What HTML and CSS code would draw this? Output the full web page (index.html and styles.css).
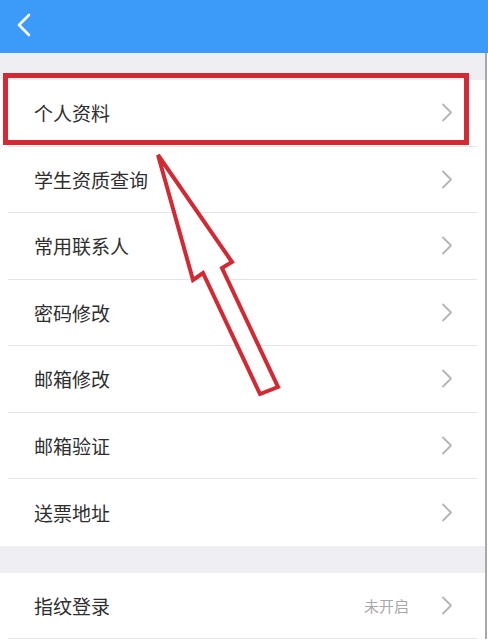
FILE: index.html
```html
<!DOCTYPE html>
<html lang="zh-CN">
<head>
  <meta charset="UTF-8" />
  <meta name="viewport" content="width=device-width, initial-scale=1.0" />
  <title>设置</title>
  <link rel="stylesheet" href="styles.css">
</head>
<body>
  <div class="page">
    <div class="topbar">
      <svg class="back" width="16" height="24" viewBox="0 0 16 24">
        <polyline points="13,2 3,12 13,22" fill="none" stroke="#fff" stroke-width="2.6" stroke-linecap="round" stroke-linejoin="round"/>
      </svg>
    </div>

    <div class="content">
      <div class="gap"></div>
      <div class="group">
        <div class="row"><span class="label">个人资料</span><svg class="chev" width="12" height="19" viewBox="0 0 12 19"><polyline points="2,1.5 10,9.5 2,17.5"/></svg></div>
        <div class="row"><span class="label">学生资质查询</span><svg class="chev" width="12" height="19" viewBox="0 0 12 19"><polyline points="2,1.5 10,9.5 2,17.5"/></svg></div>
        <div class="row"><span class="label">常用联系人</span><svg class="chev" width="12" height="19" viewBox="0 0 12 19"><polyline points="2,1.5 10,9.5 2,17.5"/></svg></div>
        <div class="row"><span class="label">密码修改</span><svg class="chev" width="12" height="19" viewBox="0 0 12 19"><polyline points="2,1.5 10,9.5 2,17.5"/></svg></div>
        <div class="row"><span class="label">邮箱修改</span><svg class="chev" width="12" height="19" viewBox="0 0 12 19"><polyline points="2,1.5 10,9.5 2,17.5"/></svg></div>
        <div class="row"><span class="label">邮箱验证</span><svg class="chev" width="12" height="19" viewBox="0 0 12 19"><polyline points="2,1.5 10,9.5 2,17.5"/></svg></div>
        <div class="row last"><span class="label">送票地址</span><svg class="chev" width="12" height="19" viewBox="0 0 12 19"><polyline points="2,1.5 10,9.5 2,17.5"/></svg></div>
      </div>
      <div class="gap"></div>
      <div class="group">
        <div class="row"><span class="label">指纹登录</span><span class="value">未开启</span><svg class="chev" width="12" height="19" viewBox="0 0 12 19"><polyline points="2,1.5 10,9.5 2,17.5"/></svg></div>
      </div>
    </div>

    <!-- annotation drawn over the screen -->
    <div class="mark-box"></div>
    <svg class="mark-arrow" width="488" height="643" viewBox="0 0 488 643">
      <polygon points="158,155 232,262 222,268 278,387 260,394 203,273 193,280" fill="#fff" stroke="#d42833" stroke-width="4" stroke-linejoin="miter"/>
    </svg>
  </div>
</body>
</html>
```

FILE: styles.css
```css
html, body {
  margin: 0;
  padding: 0;
  background: #fff;
  font-family: "Noto Sans CJK SC", "Noto Sans", sans-serif;
  overflow: hidden;
}

.page {
  position: relative;
  width: 488px;
  height: 643px;
}

.topbar {
  height: 53px;
  background: #3c9af9;
  display: flex;
  align-items: center;
  padding-left: 16px;
}

.back {
  display: block;
  margin-top: -4px;
}

.content {
  width: 485px;
  border-right: 2px solid #a8a8a8;
}

.gap {
  height: 27px;
  background: #efeff3;
}

.group {
  background: #fff;
}

.row {
  height: 66.5px;
  margin: 0 8px;
  padding: 0 24px 0 26px;
  display: flex;
  align-items: center;
  border-bottom: 1px solid #e4e4e6;
  box-sizing: border-box;
}

.row.last {
  border-bottom: none;
}

.label {
  flex: 1;
  font-size: 19px;
  color: #2e2e2e;
}

.value {
  font-size: 15px;
  color: #a8a8a8;
  margin-right: 32px;
}

.chev {
  display: block;
}

.chev polyline {
  fill: none;
  stroke: #b4b4b4;
  stroke-width: 1.8;
  stroke-linecap: round;
  stroke-linejoin: round;
}

.mark-box {
  position: absolute;
  left: 3px;
  top: 73px;
  width: 466px;
  height: 72px;
  border: 5px solid #d42833;
  box-sizing: border-box;
}

.mark-arrow {
  position: absolute;
  left: 0;
  top: 0;
}
```
